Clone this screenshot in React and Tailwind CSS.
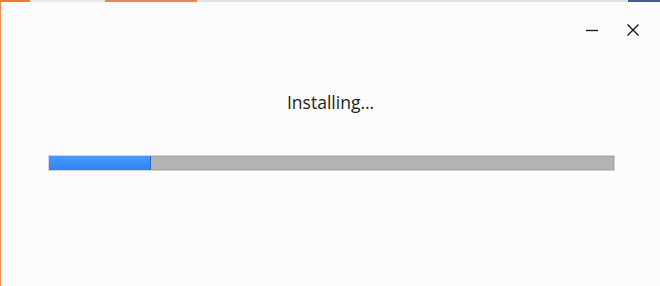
import React from 'react';

// Installer window: title buttons, status line and a progress bar
const App = () => {
  const progress = 18;

  return (
    <div className="w-[660px] h-[286px] bg-[#fbfbfb] flex flex-col overflow-hidden" style={{ fontFamily: '"Open Sans", "Noto Sans", sans-serif' }}>
      {/* desktop peeking above the window */}
      <div className="h-[2px] flex shrink-0">
        <div className="w-[30px] bg-[#f07a2c]" />
        <div className="w-[75px] bg-[#e6ebea]" />
        <div className="w-[92px] bg-[#e9874a]" />
        <div className="flex-1 bg-[#dde5e4]" />
        <div className="w-[32px] bg-[#4b5a8c]" />
      </div>

      <div className="flex flex-1 min-h-0">
        <div className="w-[1px] bg-[#f08a4a]" />
        <div className="flex-1 flex flex-col">
          <div className="flex justify-end items-center h-[56px] pr-[20px] gap-[27px]">
            <svg width="14" height="14" viewBox="0 0 14 14" className="text-[#111]">
              <path d="M1 7.5h12" stroke="currentColor" strokeWidth="1.3" />
            </svg>
            <svg width="14" height="14" viewBox="0 0 14 14" className="text-[#111]">
              <path d="M1.5 1.5l11 11M12.5 1.5l-11 11" stroke="currentColor" strokeWidth="1.3" />
            </svg>
          </div>

          <div className="text-center text-[17.5px] text-[#222] leading-none mt-[36px]">Installing…</div>

          <div className="ml-[47px] mr-[45px] mt-[43px] h-[16px] border border-[#d4d4d4] bg-[#b3b3b3] flex">
            <div className="flex-1 border border-[#a3a3a3] flex">
              <div
                className="-m-[1px] bg-gradient-to-b from-[#4a9bff] to-[#2e82f2] border-r border-[#2a6acb]"
                style={{ width: `calc(${progress}% + 1px)` }}
              />
            </div>
          </div>
        </div>
      </div>
    </div>
  );
};

export default App;
